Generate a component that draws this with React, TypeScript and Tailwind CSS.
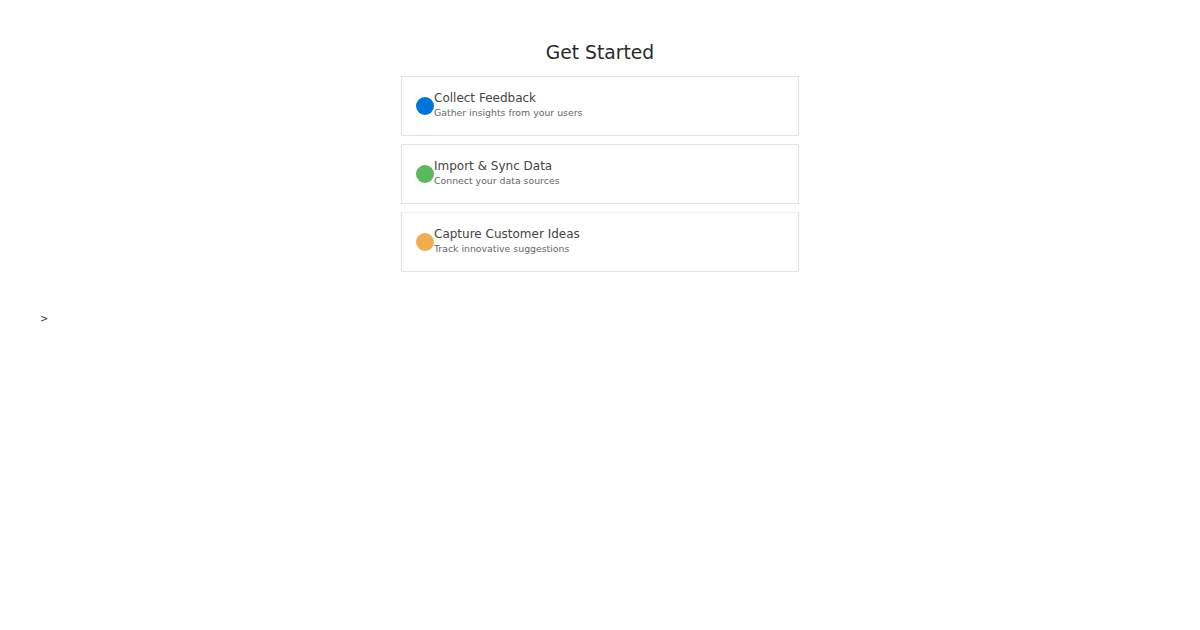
import React from 'react';

const items = [
  { title: 'Collect Feedback', desc: 'Gather insights from your users', color: 'bg-[#0074d9]', border: 'border-[#e2e2e2]' },
  { title: 'Import & Sync Data', desc: 'Connect your data sources', color: 'bg-[#5cb85c]', border: 'border-[#e2e2e2]' },
  { title: 'Capture Customer Ideas', desc: 'Track innovative suggestions', color: 'bg-[#f0ad4e]', border: 'border-[#e2e2e2] border-t-[#f2f2f2]' },
];

export default function App() {
  return (
    <div className="min-h-[630px] bg-white font-['DejaVu_Sans',sans-serif]">
      <div className="pt-[39px] flex flex-col items-center">
        <h1 className="text-[18.72px] leading-[28px] text-[#2a2a2a]">Get Started</h1>
        <div className="mt-[9px] w-[398px] flex flex-col gap-[8px]">
          {items.map((it) => (
            <div key={it.title} className={`border ${it.border} h-[60px] px-[14px] pb-[2px] flex items-center`}>
              <div className={`w-[18px] h-[18px] rounded-full ${it.color} shrink-0 mt-[2px]`} />
              <div className="flex flex-col">
                <span className="text-[12px] leading-[16px] text-[#444]">{it.title}</span>
                <span className="text-[9.36px] leading-[14px] text-[#666]">{it.desc}</span>
              </div>
            </div>
          ))}
        </div>
      </div>
      <div className="pl-[40px] mt-[41px] text-[10px] leading-[12px] text-[#333]">&gt;</div>
    </div>
  );
}
